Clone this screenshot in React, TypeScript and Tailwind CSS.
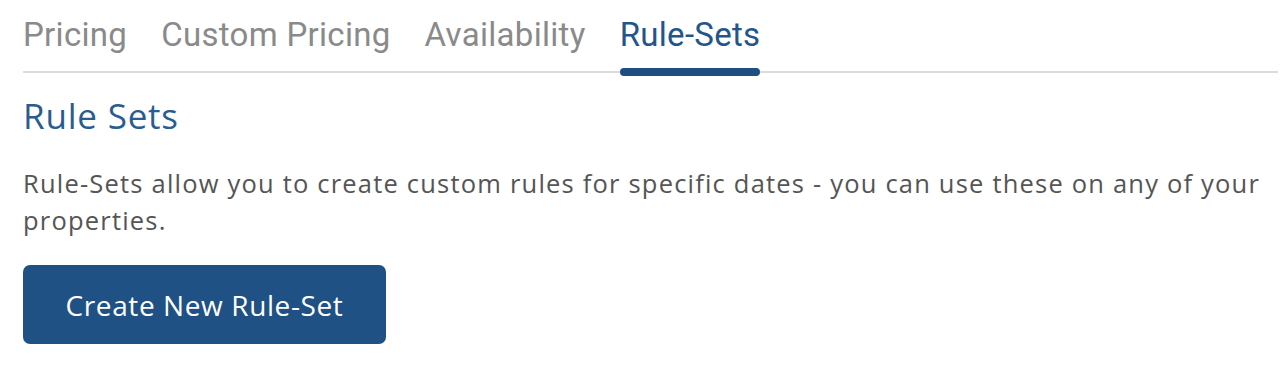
export default function App() {
  const tabs = ["Pricing", "Custom Pricing", "Availability", "Rule-Sets"];
  const active = "Rule-Sets";

  return (
    <div className="min-h-[390px] bg-white pl-[23px] pr-[2px] pt-[12px]" style={{ fontFamily: "'Open Sans', 'Liberation Sans', sans-serif" }}>
      <div className="flex gap-[34px] border-b-2 border-[#dcdcdc]">
        {tabs.map((t) => (
          <div key={t} className="relative pb-[13px]">
            <span
              className={`font-['Roboto',sans-serif] text-[33px] leading-[46px] tracking-[0.3px] ${t === active ? "text-[#23558a]" : "text-[#8a8a8a]"}`}
            >
              {t}
            </span>
            {t === active && (
              <div className="absolute bottom-[-5px] left-0 right-0 h-[8px] rounded-full bg-[#1f4f82]" />
            )}
          </div>
        ))}
      </div>

      <h2 className="mt-[20px] text-[35px] leading-[46px] tracking-[0.8px] text-[#2a5d8f]">Rule Sets</h2>

      <p className="mt-[26px] pr-[10px] text-[25.5px] leading-[37px] tracking-[1.2px] text-[#555555]">
        Rule-Sets allow you to create custom rules for specific dates - you can use these on any of your properties.
      </p>

      <button className="mt-[26px] flex h-[79px] w-[363px] items-center justify-center rounded-[7px] bg-[#1f5185] text-[28px] tracking-[0.6px] text-white">
        Create New Rule-Set
      </button>
    </div>
  );
}
